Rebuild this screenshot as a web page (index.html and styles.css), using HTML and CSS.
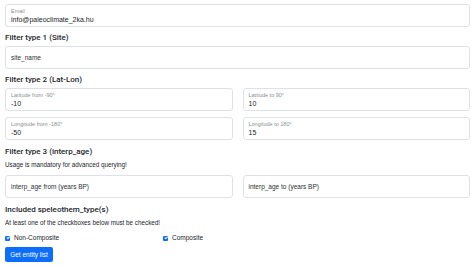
FILE: index.html
```html
<!DOCTYPE html>
<html lang="en">
  <head>
    <meta charset="UTF-8" />
    <meta name="viewport" content="width=device-width, initial-scale=1.0" />
    <title>Query form</title>
    <link rel="stylesheet" href="styles.css">
  </head>
  <body>
    <form class="container">
      <div class="field">
        <span class="field-label">Email</span>
        <span class="field-value">info@paleoclimate_2ka.hu</span>
      </div>

      <h5 class="section-title">Filter type 1 (Site)</h5>
      <div class="field empty">
        <span class="field-placeholder">site_name</span>
      </div>

      <h5 class="section-title">Filter type 2 (Lat-Lon)</h5>
      <div class="row">
        <div class="field">
          <span class="field-label">Latitude from -90°</span>
          <span class="field-value">-10</span>
        </div>
        <div class="field">
          <span class="field-label">Latitude to 90°</span>
          <span class="field-value">10</span>
        </div>
      </div>
      <div class="row second">
        <div class="field">
          <span class="field-label">Longitude from -180°</span>
          <span class="field-value">-50</span>
        </div>
        <div class="field">
          <span class="field-label">Longitude to 180°</span>
          <span class="field-value">15</span>
        </div>
      </div>

      <h5 class="section-title loose">Filter type 3 (interp_age)</h5>
      <p class="note">Usage is mandatory for advanced querying!</p>
      <div class="row">
        <div class="field empty">
          <span class="field-placeholder">interp_age from (years BP)</span>
        </div>
        <div class="field empty">
          <span class="field-placeholder">interp_age to (years BP)</span>
        </div>
      </div>

      <h5 class="section-title loose">Included speleothem_type(s)</h5>
      <p class="note">At least one of the checkboxes below must be checked!</p>
      <div class="checks">
        <label class="check"><span class="box"></span>Non-Composite</label>
        <label class="check"><span class="box"></span>Composite</label>
      </div>

      <button type="button" class="btn">Get entity list</button>
    </form>
  </body>
</html>
```

FILE: styles.css
```css
body {
  margin: 0;
  font-family: "Liberation Sans", Arial, sans-serif;
  color: #212529;
  background: #fff;
}
.container {
  display: flex;
  flex-direction: column;
  padding: 4px 4px 0 5px;
}
.field {
  flex: none;
  height: 23px;
  box-sizing: border-box;
  border: 1px solid #dee2e6;
  border-radius: 3px;
  padding: 3px 5px 0 5px;
  display: flex;
  flex-direction: column;
}
.row .field {
  flex: 1;
}
.field-label {
  font-size: 5.5px;
  line-height: 7px;
  color: #8a8f94;
}
.field-value {
  font-size: 7px;
  line-height: 9px;
}
.field.empty {
  justify-content: center;
  padding-top: 0;
}
.field-placeholder {
  font-size: 6.5px;
  color: #2b2f33;
}
.section-title {
  margin: 5px 0 3px;
  font-family: Roboto, "Liberation Sans", sans-serif;
  font-size: 8px;
  line-height: 11px;
  font-weight: 500;
}
.section-title.loose {
  margin-top: 6px;
}
.row {
  display: flex;
  gap: 10px;
}
.row.second {
  margin-top: 6px;
}
.note {
  margin: 1px 0 6px;
  font-size: 6.3px;
  line-height: 8px;
}
.checks {
  display: grid;
  grid-template-columns: 158px 1fr;
  margin-top: 1px;
}
.check {
  display: flex;
  align-items: center;
  gap: 4px;
  font-size: 6.5px;
  line-height: 8px;
}
.box {
  width: 5px;
  height: 5px;
  border-radius: 1px;
  background: #0d6efd;
  position: relative;
}
.box::after {
  content: "";
  position: absolute;
  left: 1.6px;
  top: 0.6px;
  width: 1.2px;
  height: 2.4px;
  border: solid #fff;
  border-width: 0 0.7px 0.7px 0;
  transform: rotate(45deg);
}
.btn {
  align-self: flex-start;
  margin-top: 5px;
  width: 48px;
  height: 15px;
  padding: 0;
  border: none;
  border-radius: 2px;
  background: #0d6efd;
  color: #fff;
  font-family: inherit;
  font-size: 6.5px;
}
```
